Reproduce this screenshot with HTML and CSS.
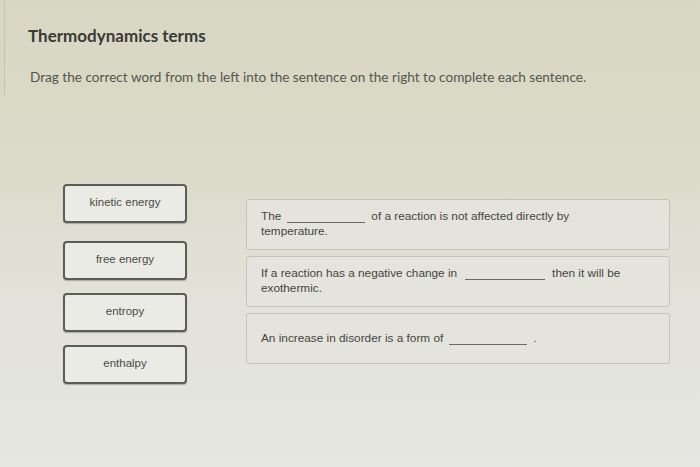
FILE: index.html
```html
<!DOCTYPE html>
<html>
<head>
<meta charset="utf-8">
<link rel="stylesheet" href="styles.css">
</head>
<body>
<div class="screen">
  <div class="edge"></div>
  <div class="page">
    <h1 class="title">Thermodynamics terms</h1>
    <p class="instr">Drag the correct word from the left into the sentence on the right to complete each sentence.</p>
    <div class="work">
      <div class="words">
        <div class="word first">kinetic energy</div>
        <div class="word">free energy</div>
        <div class="word">entropy</div>
        <div class="word">enthalpy</div>
      </div>
      <div class="sentences">
        <div class="sentence"><p class="stext">The<span class="blank"></span>of a reaction is not affected directly by temperature.</p></div>
        <div class="sentence"><p class="stext">If a reaction has a negative change in<span class="blank wide"></span>then it will be exothermic.</p></div>
        <div class="sentence"><p class="stext">An increase in disorder is a form of<span class="blank"></span>.</p></div>
      </div>
    </div>
  </div>
</div>
</body>
</html>
```

FILE: styles.css
```css
html, body {
  margin: 0;
  padding: 0;
}
body {
  width: 700px;
  height: 467px;
  overflow: hidden;
  background: linear-gradient(180deg, #d7d7c3 0%, #dadac8 30%, #e2e2da 65%, #e6e6e2 100%);
}
.screen {
  position: relative;
  width: 700px;
  height: 467px;
}
.edge {
  position: absolute;
  left: 4px;
  top: 0;
  width: 1px;
  height: 96px;
  background: #c4c4b2;
}
.page {
  padding: 25px 0 0 28px;
}
.title {
  margin: 0;
  font-family: Lato, "Open Sans", sans-serif;
  font-weight: 700;
  font-size: 17px;
  line-height: 22px;
  color: #3a3a36;
}
.instr {
  margin: 21px 0 0 2px;
  font-family: Lato, "Open Sans", sans-serif;
  font-size: 13.6px;
  line-height: 18px;
  color: #55554f;
}
.work {
  display: flex;
  margin-top: 98px;
  padding-left: 35px;
}
.words {
  display: flex;
  flex-direction: column;
  gap: 13px;
  width: 124px;
}
.word.first {
  margin-bottom: 5px;
}
.word {
  box-sizing: border-box;
  height: 39px;
  border: 2px solid #5c5c58;
  border-radius: 4px;
  background: #ebebe5;
  box-shadow: 0 1px 1px rgba(0,0,0,0.25);
  display: flex;
  align-items: center;
  justify-content: center;
  font-family: "Liberation Sans", Arial, sans-serif;
  font-size: 11.5px;
  color: #4a4a46;
  padding-bottom: 3px;
}
.sentences {
  display: flex;
  flex-direction: column;
  gap: 6px;
  margin-left: 59px;
  margin-top: 15px;
  width: 424px;
}
.sentence {
  box-sizing: border-box;
  min-height: 51px;
  border: 1px solid #c4c4bc;
  border-radius: 3px;
  background: #e4e4dc;
  display: flex;
  align-items: center;
  padding: 8px 36px 9px 14px;
}
.stext {
  margin: 0;
  font-family: "Liberation Sans", Arial, sans-serif;
  font-size: 11.8px;
  line-height: 15px;
  color: #45453f;
}
.blank {
  display: inline-block;
  width: 78px;
  height: 10px;
  border-bottom: 1px solid #6a6a64;
  margin: 0 6px;
  vertical-align: -3px;
}
.blank.wide {
  width: 80px;
  margin: 0 7px 0 8px;
}
```
